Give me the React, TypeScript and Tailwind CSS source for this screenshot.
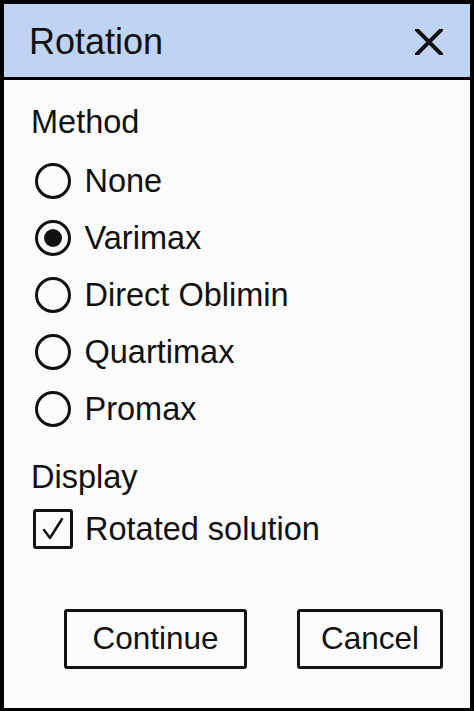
import { useState } from 'react';

const methods = ['None', 'Varimax', 'Direct Oblimin', 'Quartimax', 'Promax'];

export default function App() {
    const [method, setMethod] = useState('Varimax');
    const [rotated, setRotated] = useState(true);

    return (
        <div
            className="flex min-h-screen w-full flex-col border-[4px] border-b-[3px] border-black bg-[#fbfbfb] text-[#111]"
            style={{ fontFamily: '"Liberation Sans", Arial, sans-serif' }}
        >
            {/* Title bar */}
            <div className="flex h-[76px] shrink-0 items-center justify-between border-b-[3px] border-black bg-[#bfd3f3] pl-[25px] pr-[27px] pt-[3px]">
                <h1 className="text-[36px] leading-[36px]">Rotation</h1>
                <button aria-label="Close" className="flex h-[28px] w-[28px] items-center justify-center">
                    <svg width="28" height="26" viewBox="0 0 28 26" fill="none">
                        <path d="M2 1 L26 25 M26 1 L2 25" stroke="#111" strokeWidth="4" strokeLinecap="square" />
                    </svg>
                </button>
            </div>

            {/* Body */}
            <div className="flex flex-1 flex-col pl-[27px] pr-[27px] pt-[26px] pb-[39px]">
                <div className="text-[32.5px] leading-[32px]">Method</div>

                <div className="mt-[14.5px] flex flex-col">
                    {methods.map(m => (
                        <label key={m} className="ml-[4px] flex h-[57px] cursor-pointer items-center gap-[13.5px]">
                            <input
                                type="radio"
                                name="method"
                                className="sr-only"
                                checked={method === m}
                                onChange={() => setMethod(m)}
                            />
                            <span className="flex h-[36px] w-[36px] items-center justify-center rounded-full border-[3px] border-[#111]">
                                {method === m && <span className="h-[18px] w-[18px] rounded-full bg-[#111]" />}
                            </span>
                            <span className="text-[32.5px] leading-[32px]">{m}</span>
                        </label>
                    ))}
                </div>

                <div className="mt-[23.5px] text-[32.5px] leading-[32px]">Display</div>

                <label className="ml-[2px] mt-[16px] flex h-[40px] cursor-pointer items-center gap-[12px]">
                    <input
                        type="checkbox"
                        className="sr-only"
                        checked={rotated}
                        onChange={e => setRotated(e.target.checked)}
                    />
                    <span className="flex h-[40px] w-[40px] items-center justify-center rounded-[3px] border-[3px] border-[#111]">
                        {rotated && (
                            <svg width="24" height="24" viewBox="0 0 24 24" fill="none">
                                <path d="M3 13 L9 21 L21 2" stroke="#111" strokeWidth="2.5" strokeLinecap="round" strokeLinejoin="round" />
                            </svg>
                        )}
                    </span>
                    <span className="text-[32.5px] leading-[32px]">Rotated solution</span>
                </label>

                <div className="mt-auto flex justify-end gap-[50px]">
                    <button className="h-[60px] w-[183px] rounded-[3px] border-[3px] border-[#111] text-[31.5px] leading-none">
                        Continue
                    </button>
                    <button className="h-[60px] w-[146px] rounded-[3px] border-[3px] border-[#111] text-[31.5px] leading-none">
                        Cancel
                    </button>
                </div>
            </div>
        </div>
    );
}
